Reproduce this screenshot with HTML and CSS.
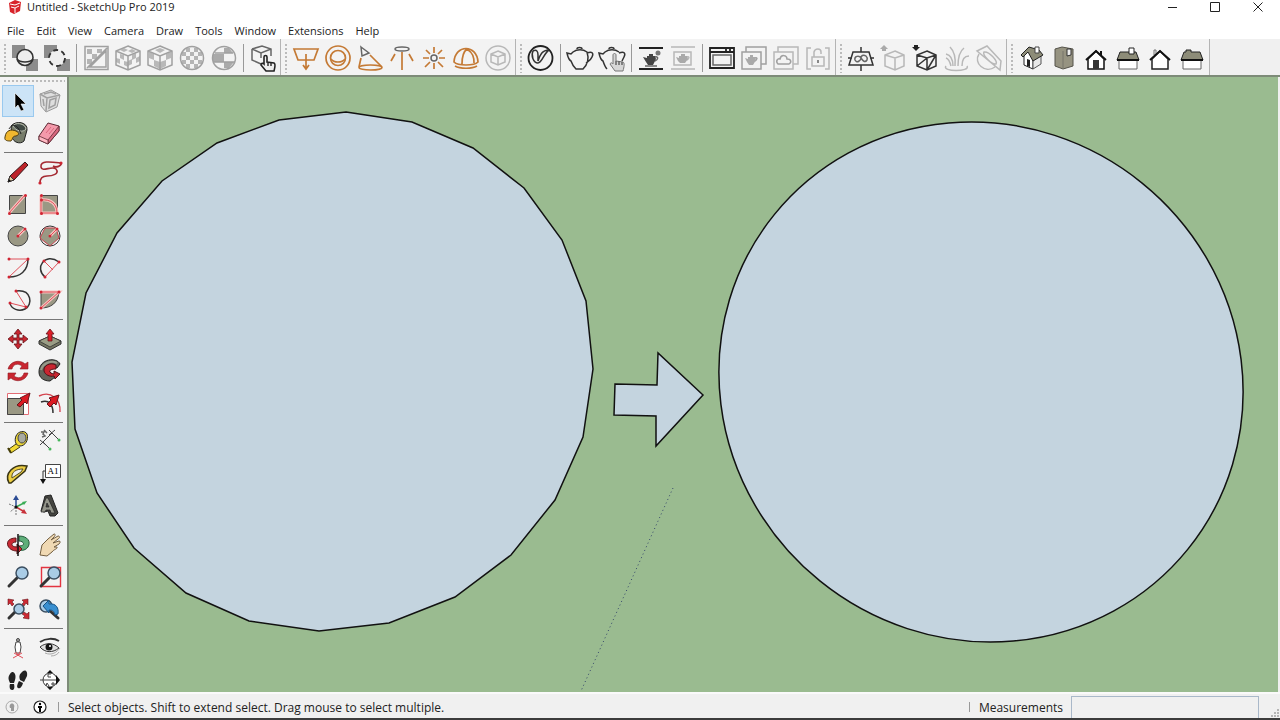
FILE: index.html
```html
<!DOCTYPE html>
<html lang="en">
<head>
    <meta charset="UTF-8">
    <meta name="viewport" content="width=device-width, initial-scale=1">
    <title>Untitled - SketchUp Pro 2019</title>
    <link rel="stylesheet" href="styles.css">
</head>
<body>

<header class="titlebar">
    <svg class="logo" viewBox="0 0 14 14"><path d="M1 3L7 0l6 2-1 9-6 3-4-2z" fill="#d8232a"/><path d="M2 4l5 1 5-2M3 7l4 1v5M7 8l4-2" fill="none" stroke="#fff"/></svg>
    <h1>Untitled - SketchUp Pro 2019</h1>
    <div class="window-buttons">
        <button aria-label="Minimize"><svg viewBox="0 0 12 12"><path d="M2 6.500h9"/></svg></button>
        <button aria-label="Maximize"><svg viewBox="0 0 12 12"><path d="M1.500 1.500h9v9h-9z"/></svg></button>
        <button aria-label="Close"><svg viewBox="0 0 12 12"><path d="M1.500 1.500l9 9M10.500 1.500l-9 9"/></svg></button>
    </div>
</header>

<nav class="menu">
    <button>File</button>
    <button>Edit</button>
    <button>View</button>
    <button>Camera</button>
    <button>Draw</button>
    <button>Tools</button>
    <button>Window</button>
    <button>Extensions</button>
    <button>Help</button>
</nav>

<div class="toolbar">
    <div class="group">
        <span class="grip"></span>
        <button class="tool" aria-label="Solid section"><svg viewBox="0 0 32 32"><path d="M3 3h13v13H3zM17 17h12v12H17z" fill="#8c8c8c"/><circle cx="16" cy="15.500" r="8" fill="#eee" stroke="#333" stroke-width="1.600"/><path d="M8 17c3 4 13 4 16 0" class="dark"/></svg></button>
        <button class="tool" aria-label="Hidden section"><svg viewBox="0 0 32 32"><path d="M3 3h13v13H3zM16 17h13v12H16z" fill="#8c8c8c"/><circle cx="16" cy="16" r="8" fill="#eee" stroke="#333" stroke-width="1.800" stroke-dasharray="5 3.400"/></svg></button>
        <span class="divider"></span>
        <button class="tool" aria-label="Plane mapping"><svg viewBox="0 0 32 32"><path d="M7 7h5v5H7zM17 7h5v4h-5zM12 12h5v5h-5zM7 17h5v5H7z" fill="#b4b4b4"/><path d="M5 4.500h23v23H5zM7 26L27 6M10 25h16V9z" class="grey"/></svg></button>
        <button class="tool" aria-label="Box mapping"><svg viewBox="0 0 32 32"><path d="M8 12l4 1v5l-4-2zM4 16l4 1v5l-4-2zM12 19l4 1v5l-4-2zM20 13l4-2v5l-4 2zM16 19l4-2v5l-4 2zM24 16l4-2v5l-4 2zM12 6l4 2-4 2-4-2zM20 7l4 2-4 2-4-2z" fill="#b8b8b8"/><path d="M16 4l12 5v14l-12 5-12-5V9zM4 9l12 5 12-5M16 14v14" class="grey"/></svg></button>
        <button class="tool" aria-label="Fit box mapping"><svg viewBox="0 0 32 32"><path d="M16 6l5 2-5 3-5-3zM5 10l5 2v6l-5-2zM10 18l6 2v7l-6-3zM22 12l5-2v6l-5 2zM16 20l6-2v6l-6 3z" fill="#b8b8b8"/><path d="M16 4l12 5v14l-12 5-12-5V9zM4 9l12 5 12-5M16 14v14" class="grey"/></svg></button>
        <button class="tool" aria-label="Sphere mapping"><svg viewBox="0 0 32 32"><path d="M10 6h4v4h-4zM18 6h4v4h-4zM6 10h4v4H6zM14 10h4v4h-4zM22 10h4v4h-4zM10 14h4v4h-4zM18 14h4v4h-4zM6 18h4v4H6zM14 18h4v4h-4zM22 18h4v4h-4zM10 22h4v4h-4zM18 22h4v4h-4z" fill="#b4b4b4"/><circle cx="16" cy="16" r="11.500" class="grey"/></svg></button>
        <button class="tool" aria-label="Wrap mapping"><svg viewBox="0 0 32 32"><path d="M16 6h5l4 5h-9zM5 12h11v8H5zM16 20h10l-5 6h-5z" fill="#aaa"/><circle cx="16" cy="16" r="11.500" class="grey"/><path d="M7 11h18M5 20h22" class="grey"/></svg></button>
        <span class="divider"></span>
        <button class="tool" aria-label="Pick object"><svg viewBox="0 0 32 32"><path d="M5 7l10-3 9 3v7M5 7l9 4 10-4M5 7v11l9 4M14 11v5" class="mid"/><path d="M17 15c0-2 3-2 3 0v5l7 1c2 1 1 4 0 8h-8l-5-6c0-2 2-2 3-1z" fill="#eee" stroke="#222" stroke-width="1.600"/><path d="M21 21v3M24 21v3" class="dark"/></svg></button>
    </div>
    <div class="group">
        <span class="grip"></span>
        <button class="tool" aria-label="Plane light"><svg viewBox="0 0 32 32"><path d="M4 7h24l-4 11H8zM16 12v14M13 23l3 4 3-4" class="orange"/></svg></button>
        <button class="tool" aria-label="Sphere light"><svg viewBox="0 0 32 32"><circle cx="16" cy="16" r="12" class="orange"/><circle cx="16" cy="16" r="7.500" class="orange"/><path d="M9 17c3 4 11 4 14 0" class="orange"/></svg></button>
        <button class="tool" aria-label="Spot light"><svg viewBox="0 0 32 32"><path d="M7 5l8 6-7 3z" class="mid"/><path d="M7 16L5 25M16 13l12 12" class="orange"/><ellipse cx="16.500" cy="25.500" rx="11.500" ry="2.500" class="orange"/></svg></button>
        <button class="tool" aria-label="IES light"><svg viewBox="0 0 32 32"><ellipse cx="16" cy="7" rx="7" ry="2" class="mid"/><path d="M16 10v18M9 12l-4 7M23 12l4 7" class="orange"/></svg></button>
        <button class="tool" aria-label="Omni light"><svg viewBox="0 0 32 32"><circle cx="16" cy="16" r="3" class="mid"/><path d="M16 5v6M16 21v6M5 16h6M21 16h6M8 8l4 4M20 20l5 5M24 8l-4 4M12 20l-5 5" class="orange"/></svg></button>
        <button class="tool" aria-label="Dome light"><svg viewBox="0 0 32 32"><path d="M4 20C5 2 27 2 28 20c-4 4-20 4-24 0zM17 7c-4 3-5 9-5 15M17 7c6 4 7 8 7 14M5 24c5 3 17 3 22 0" class="orange"/></svg></button>
        <button class="tool" aria-label="Mesh light"><svg viewBox="0 0 32 32"><g class="light"><circle cx="16" cy="16" r="12"/><path d="M16 9l7 3v8l-7 3-7-3v-8zM9 12l7 3 7-3M16 15v8"/></g></svg></button>
    </div>
    <div class="group">
        <span class="grip"></span>
        <button class="tool" aria-label="Asset editor"><svg viewBox="0 0 32 32"><circle cx="15.500" cy="16" r="12" fill="none" stroke="#222" stroke-width="1.800"/><path d="M8 9c4-2 5 1 5 4v6c2-6 4-11 11-11M8 9c-2 4 0 12 5 12 4 0 6-10 11-13" class="dark"/></svg></button>
        <span class="divider"></span>
        <button class="tool" aria-label="Render"><svg viewBox="0 0 32 32"><path d="M9 10c4-3 10-3 14 0 2 6 1 12-4 17h-7c-2-2-4-5-5-8-2-1-3-3-4-8l4 1zM13 7c0-2 5-2 5 0M23 11c5-2 7 0 5 4-1 3-3 4-6 6" class="dark"/></svg></button>
        <button class="tool" aria-label="Interactive render"><svg viewBox="0 0 32 32"><path d="M11 27c-2-2-3-5-4-8-2-1-3-3-4-8l4 1 2-2c4-3 10-3 14 0M13 7c0-2 5-2 5 0M23 11c5-2 7 0 5 4l-2 4" class="dark"/><path d="M17 13c0-2 3-2 3 0v6l7 1c2 1 1 5 0 9h-8l-5-7c1-2 2-1 3 0z" fill="#d7d7d7" stroke="#777"/><path d="M20 19v4M23 19v4M26 20v3" class="mid"/></svg></button>
        <span class="divider"></span>
        <button class="tool" aria-label="Viewport render"><svg viewBox="0 0 32 32"><path d="M4 6h24M4 27h24" stroke="#222" stroke-width="2"/><path d="M12 14h8l1 3-3 6h-5l-2-3-3-5 4 1zM14 12h4v2h-4z" fill="#444"/><path d="M20 15c4-1 3 3 0 4M10 24h12" class="mid"/><circle cx="23" cy="11" r="2.500" fill="#777"/></svg></button>
        <button class="tool" aria-label="Viewport region"><svg viewBox="0 0 32 32"><g class="light"><path d="M4 5h24M4 27h24M7 10h17v13H7zM20 15c3-1 2 2 0 3"/></g><path d="M12 14h8l1 3-3 4h-5l-2-2-2-4 3 1zM14 12h4v2h-4z" fill="#aaa"/></svg></button>
        <span class="divider"></span>
        <button class="tool" aria-label="Frame buffer"><svg viewBox="0 0 32 32"><path d="M4 6h24v20H4zM4 10h24M20 6v4M24 6v4" fill="none" stroke="#222" stroke-width="1.800"/><path d="M7 13h18v10H7z" class="mid"/></svg></button>
        <button class="tool" aria-label="Batch render"><svg viewBox="0 0 32 32"><g class="grey"><path d="M4 10h19v17H4zM8 10V5h20v17h-5M17 16c3-1 2 2 0 3"/></g><path d="M10 15h7l1 3-3 5h-4l-2-3-2-4 3 1zM12 13h3v2h-3z" fill="#aaa"/></svg></button>
        <button class="tool" aria-label="Cloud render"><svg viewBox="0 0 32 32"><g class="light"><path d="M4 10h19v17H4zM8 10V5h20v17h-5"/></g><path d="M8 22c-3-3 0-6 2-5 1-5 7-4 7 0 4 0 5 3 2 5z" class="grey"/></svg></button>
        <button class="tool" aria-label="Lock camera"><svg viewBox="0 0 32 32"><g class="light"><path d="M9 6H5v21h4M23 6h4v21h-4M10 15h12v9H10zM12 15V10c1-4 7-4 7 0v2"/></g><path d="M15 18h2v3h-2z" fill="#888"/></svg></button>
    </div>
    <div class="group">
        <span class="grip"></span>
        <button class="tool" aria-label="Infinite plane"><svg viewBox="0 0 32 32"><path d="M8 10h16l4 13H4zM16 5v5M16 23v6M3 16h4M25 16h4" class="dark"/><path d="M21 14c-3-2-5 0-5 2s-4 6-6 2c-1-4 4-5 6-2s4 5 6 2c1-2 0-3-1-4" class="mid"/></svg></button>
        <button class="tool" aria-label="Export proxy"><svg viewBox="0 0 32 32"><g class="light"><path d="M18 9l9 4v11l-9 4-10-4V13zM8 13l10 3 9-3M18 16v12"/></g><path d="M3 7l4-4 4 4H9v2H5V7z" fill="#aaa"/></svg></button>
        <button class="tool" aria-label="Import proxy"><svg viewBox="0 0 32 32"><path d="M18 9l9 4v11l-9 4-10-4V13zM8 13l10 3 9-3M18 16v12M8 24l10-8M18 28l9-15" class="dark"/><path d="M5 3h4v2h2L7 9 3 5h2z" fill="#222"/></svg></button>
        <button class="tool" aria-label="Fur"><svg viewBox="0 0 32 32"><g class="light"><path d="M12 24c0-7-3-11-7-12M14 24c1-10-1-15-5-19M17 24c0-9 2-15 6-18M21 24c0-7 3-10 7-10M5 16c3 1 4 4 5 8M5 24c-5 6 25 6 21 0"/></g></svg></button>
        <button class="tool" aria-label="Clipper"><svg viewBox="0 0 32 32"><g class="light"><path d="M4 9l10-5 14 15-1 9zM11 10c5-1 14 9 12 12-4 1-14-9-12-12zM6 12c-6 9 6 20 16 13"/></g></svg></button>
    </div>
    <div class="group">
        <span class="grip"></span>
        <button class="tool" aria-label="Iso"><svg viewBox="0 0 32 32"><path d="M8 14l5-5 4 8v10l-9-4z" fill="#fff" stroke="#222"/><path d="M17 18l8-5v9l-8 5z" fill="#e8e8e8" stroke="#555"/><path d="M5 13l8-8 10 3 4 5-10 6-5-9-5 5z" fill="#8d8c78" stroke="#222"/><path d="M19 5h4v6h-4z" fill="#fff" stroke="#444"/><path d="M11 17l3 1v7l-3-1z" fill="#222"/></svg></button>
        <button class="tool" aria-label="Top"><svg viewBox="0 0 32 32"><path d="M7 7l7-2 11 2v17l-10 3-8-3z" fill="#969381" stroke="#55534a"/><path d="M15 9v18" stroke="#77756a"/><path d="M19 7h4v6l-4 1z" fill="#eee" stroke="#333"/></svg></button>
        <button class="tool" aria-label="Front"><svg viewBox="0 0 32 32"><path d="M8 17l8-8 8 8v10H8z" fill="#fff" stroke="#111" stroke-width="1.500"/><path d="M6 18l10-9 10 9M21 9v4" fill="none" stroke="#111" stroke-width="2"/><path d="M13 18h6v9h-6z" fill="#333"/></svg></button>
        <button class="tool" aria-label="Right"><svg viewBox="0 0 32 32"><path d="M7 18h18v9H7z" fill="#fff" stroke="#666"/><path d="M8 10h16l3 8H5z" fill="#8d8c78" stroke="#222"/><path d="M5 18h22" stroke="#111" stroke-width="2"/><path d="M17 6h5v6h-5z" fill="#fff" stroke="#222"/></svg></button>
        <button class="tool" aria-label="Back"><svg viewBox="0 0 32 32"><path d="M10 8h2v5h-2z" fill="#eee" stroke="#777"/><path d="M8 17l8-8 8 8v10H8z" fill="#fff" stroke="#222" stroke-width="1.500"/><path d="M6 18l10-9 10 9" fill="none" stroke="#111" stroke-width="2"/></svg></button>
        <button class="tool" aria-label="Left"><svg viewBox="0 0 32 32"><path d="M7 18h18v9H7z" fill="#fff" stroke="#666"/><path d="M8 10h2V8h5v2h9l3 8H5z" fill="#8d8c78" stroke="#222"/><path d="M5 18h22" stroke="#111" stroke-width="2"/></svg></button>
    </div>
</div>

<main class="workspace">
    <aside class="palette">
        <span class="palette-grip"></span>
        <div class="tools">
            <button class="tool selected" aria-label="Select"><svg viewBox="0 0 32 32"><path d="M13 8v15l3-3 3 6 3-1-3-6h5z" fill="#000" stroke="#fff" stroke-width="0.600"/></svg></button>
            <button class="tool" aria-label="Make component"><svg viewBox="0 0 32 32"><path d="M6 9l11-4 9 5-3 12-11 5-5-6z" fill="#dedede" stroke="#999"/><path d="M6 9l7 4 13-3M13 13l-1 13M10 9l7-2 5 2M9 14l1 7M16 15l6-2-1 7-6 3z" class="grey"/></svg></button>
            <button class="tool" aria-label="Paint bucket"><svg viewBox="0 0 32 32"><path d="M9 9c5-6 17-4 16 4l-3 11c-4 4-11 1-12-4z" fill="#777d6b" stroke="#222"/><path d="M11 9c2-4 12-3 13 3-3 4-10 2-13-3z" fill="#404944" stroke="#b9beb0"/><path d="M3 20c1-7 6-8 11-6 4 2 3 4 0 5-4 0-3 3-5 5-3 0-7 0-6-4z" fill="#f0b72e" stroke="#4c3a10"/><path d="M7 12c3-5 8-6 12 5" fill="none" stroke="#222"/></svg></button>
            <button class="tool" aria-label="Eraser"><svg viewBox="0 0 32 32"><path d="M14 6l11 3v5L14 27l-9-4v-4z" fill="#f49aab" stroke="#5e2934"/><path d="M14 23L25 9v5L14 27z" fill="#d9687f" stroke="#5e2934" stroke-width="0.800"/><path d="M5 19l9 4v4l-9-4z" fill="#ffb8c2" stroke="#5e2934" stroke-width="0.800"/><path d="M17 10l-5 6M20 11l-5 6" fill="none" stroke="#d9687f"/></svg></button>
        </div>
        <span class="rule"></span>
        <div class="tools">
            <button class="tool" aria-label="Line"><svg viewBox="0 0 32 32"><path d="M6 26l2-6L23 6l3 3-14 15z" fill="#bd2329" stroke="#351819"/><path d="M6 26l2-6 4 4z" fill="#e6c69a" stroke="#333"/><path d="M6 26l1-3 2 2z" fill="#111"/></svg></button>
            <button class="tool" aria-label="Freehand"><svg viewBox="0 0 32 32"><path d="M27 7C18 6 6 4 7 11c1 6 11-2 15 2 4 5-4 7-9 7-4 0-7 2-7 7M27 7c1 3-5 5-8 3" fill="none" stroke="#a52a32" stroke-width="1.600"/><g class="dot"><circle cx="6" cy="27" r="1.600"/><circle cx="27" cy="7" r="1.600"/></g></svg></button>
            <button class="tool" aria-label="Rectangle"><svg viewBox="0 0 32 32"><path d="M7.500 7.500h16v18h-16z" class="face"/><path d="M7 25L23 7" class="halo"/><path d="M7 25L23 7" class="red"/><g class="dot"><circle cx="7.500" cy="25.500" r="1.500"/><circle cx="23.500" cy="7.500" r="1.500"/></g></svg></button>
            <button class="tool" aria-label="Rotated rectangle"><svg viewBox="0 0 32 32"><path d="M7.500 7.500h16v18h-16z" class="face"/><path d="M7 12c10-1 16 4 16 13M7 7v18h16" class="halo"/><path d="M7 12c10-1 16 4 16 13M7 7v18h16" class="red"/><g class="dot"><circle cx="7.500" cy="7.500" r="1.500"/><circle cx="7.500" cy="12" r="1.500"/><circle cx="7.500" cy="25.500" r="1.500"/><circle cx="23.500" cy="25.500" r="1.500"/></g></svg></button>
            <button class="tool" aria-label="Circle"><svg viewBox="0 0 32 32"><circle cx="16" cy="16" r="10" class="face"/><path d="M16 16l7-7" class="halo"/><path d="M16 16l7-7" class="red"/><g class="dot"><circle cx="16" cy="16" r="1.500"/><circle cx="23" cy="9" r="1.500"/></g></svg></button>
            <button class="tool" aria-label="Polygon"><svg viewBox="0 0 32 32"><circle cx="16" cy="16" r="10" fill="#eee" stroke="#333"/><path d="M11 8l11 0 3 10-9 8-10-8z" fill="#9a9884" stroke="#c6424b"/><path d="M16 16l7-7" class="halo"/><path d="M16 16l7-7" class="red"/><g class="dot"><circle cx="16" cy="16" r="1.500"/><circle cx="23" cy="9" r="1.500"/></g></svg></button>
            <button class="tool" aria-label="Arc"><svg viewBox="0 0 32 32"><path d="M26 7c0 12-8 18-19 18" class="dark"/><path d="M7 7h19L7 25" class="red"/><g class="dot"><circle cx="7" cy="7" r="1.500"/><circle cx="26" cy="7" r="1.500"/><circle cx="7" cy="25" r="1.500"/></g></svg></button>
            <button class="tool" aria-label="2 point arc"><svg viewBox="0 0 32 32"><path d="M11 25C0 16 11 0 25 10" class="dark"/><path d="M10 9l9 9M25 10L11 25" class="red"/><g class="dot"><circle cx="10" cy="9" r="1.500"/><circle cx="25" cy="10" r="1.500"/><circle cx="11" cy="25" r="1.500"/></g></svg></button>
            <button class="tool" aria-label="3 point arc"><svg viewBox="0 0 32 32"><path d="M14 7c16-2 17 14 9 18-6 3-14 0-15-6" class="dark"/><path d="M14 7l10 16-16-4" class="red"/><g class="dot"><circle cx="14" cy="7" r="1.500"/><circle cx="24" cy="23" r="1.500"/><circle cx="8" cy="19" r="1.500"/></g></svg></button>
            <button class="tool" aria-label="Pie"><svg viewBox="0 0 32 32"><path d="M7 8h18c-1 11-8 16-18 16z" class="face"/><path d="M7 24L25 8H7" class="halo"/><path d="M7 24L25 8H7" class="red"/><g class="dot"><circle cx="7" cy="8" r="1.500"/><circle cx="25" cy="8" r="1.500"/><circle cx="7" cy="24" r="1.500"/></g></svg></button>
        </div>
        <span class="rule"></span>
        <div class="tools">
            <button class="tool" aria-label="Move"><svg viewBox="0 0 32 32"><path d="M16 6l4 5h-3v4h4v-3l5 4-5 4v-3h-4v4h3l-4 5-4-5h3v-4h-4v3l-5-4 5-4v3h4v-4h-3z" fill="#c92630" stroke="#65151b" stroke-width="0.800"/></svg></button>
            <button class="tool" aria-label="Push pull"><svg viewBox="0 0 32 32"><path d="M5 18l11-5 11 5v3l-11 6-11-6z" fill="#737460" stroke="#333"/><path d="M5 18l11-5 11 5-11 6z" fill="#9a9d85" stroke="#333" stroke-width="0.800"/><path d="M16 6l4 5h-2v7h-4v-7h-2z" fill="#dc1f28" stroke="#65151b" stroke-width="0.800"/></svg></button>
            <button class="tool" aria-label="Rotate"><svg viewBox="0 0 32 32"><path d="M6 14c2-8 12-10 17-5l3-2v7h-8l2-3c-4-3-9-2-10 3zM26 18c-2 8-12 10-17 5l-3 2v-7h8l-2 3c4 3 9 2 10-3z" fill="#c92630" stroke="#8f1b22" stroke-width="0.600"/></svg></button>
            <button class="tool" aria-label="Follow me"><svg viewBox="0 0 32 32"><path d="M5 17C5 3 23 2 26 9l-3 4c-6-4-11 0-7 4l5 5-5 4c-6 0-11-3-11-9z" fill="#63645a" stroke="#222"/><path d="M22 10c-5-3-13 0-12 6 1 4 6 6 10 5l1 3 5-5-6-3v3c-6-1-6-5 2-5z" fill="#c92630" stroke="#4a1417"/><path d="M7 15c2-7 10-10 16-7" fill="none" stroke="#999c8b" stroke-width="2"/></svg></button>
            <button class="tool" aria-label="Scale"><svg viewBox="0 0 32 32"><path d="M5.500 6.500h21v21h-21z" fill="#fff" stroke="#e46d75"/><path d="M5.500 11.500h16v16h-16z" class="face"/><path d="M15 18l5-5-2-2 10-5-3 11-2-2-5 5z" fill="#db1922" stroke="#65151b"/></svg></button>
            <button class="tool" aria-label="Offset"><svg viewBox="0 0 32 32"><path d="M5 9c12-6 22 4 21 16" fill="none" stroke="#d4444e" stroke-width="1.400"/><path d="M7 15c8-3 12 3 12 11" class="dark"/><path d="M13 17l4-4-2-2 10-3-3 10-2-2-4 4z" fill="#db1922" stroke="#65151b"/></svg></button>
        </div>
        <span class="rule"></span>
        <div class="tools">
            <button class="tool" aria-label="Tape measure"><svg viewBox="0 0 32 32"><path d="M14 18l-7 5 2 4 9-6" fill="#f1d934" stroke="#443d08"/><path d="M14 10c2-5 9-6 11-2 2 6-2 12-7 12-4 0-6-5-4-10z" fill="#f1d934" stroke="#222"/><ellipse cx="20" cy="12" rx="4" ry="5" fill="#a8aaa0" stroke="#444"/><path d="M6 22l3 5" stroke="#443d08" stroke-width="2"/></svg></button>
            <button class="tool" aria-label="Dimension"><svg viewBox="0 0 32 32"><path d="M9 16l9-9M9 16l6 6M18 7l6 6M6 14l6 5M6 19l6-6M15 4l6 6M15 9l6-5" fill="none" stroke="#444"/><path d="M7 6l3 0-1 2 2 2-3 1M10 4l3 3" class="mid"/><circle cx="16" cy="23" r="1.500" fill="#45b65a"/><circle cx="25" cy="14" r="1.500" fill="#45b65a"/></svg></button>
            <button class="tool" aria-label="Protractor"><svg viewBox="0 0 32 32"><path d="M7 25C2 16 11 5 25 8l-2 5L9 25z" fill="#edce42" stroke="#393515" stroke-width="1.500"/><path d="M10 20c-1-6 4-9 11-9l-2 3z" fill="#eee" stroke="#544e22"/></svg></button>
            <button class="tool" aria-label="Text"><svg viewBox="0 0 32 32"><path d="M11.500 6.500h15v13h-15z" fill="#fff" stroke="#444"/><text x="19" y="16" class="label-text">A1</text><path d="M11 13H9v9" fill="none" stroke="#333"/><path d="M6 21h6l-3 5z" fill="#111"/></svg></button>
            <button class="tool" aria-label="Axes"><svg viewBox="0 0 32 32"><path d="M14 17V7" stroke="#2b4c94" stroke-width="1.500"/><path d="M14 5l3 5h-6z" fill="#2b4c94"/><path d="M14 17l8-4" stroke="#3aad56" stroke-width="1.500"/><path d="M25 11l-3 4-2-3z" fill="#3aad56"/><path d="M14 17l7 4" stroke="#c8323a" stroke-width="1.500"/><path d="M25 24l-6-1 3-4z" fill="#c8323a"/><path d="M7 14l7 3-6 5M14 17v8" stroke="#777" stroke-dasharray="2 1" fill="none"/><circle cx="14" cy="17" r="1.600" fill="#111"/></svg></button>
            <button class="tool" aria-label="3D text"><svg viewBox="0 0 32 32"><path d="M7 21l4-15 6-1 7 18-3 3-5 0-2-5-4 1z" fill="#454540" stroke="#222"/><path d="M12 8h2l7 15h-4l-1-3-4 0-1 2H7zM12 17h3l-2-4z" fill="#94958a" stroke="#222" stroke-width="0.700"/></svg></button>
        </div>
        <span class="rule"></span>
        <div class="tools">
            <button class="tool" aria-label="Orbit"><svg viewBox="0 0 32 32"><path d="M17 7c9 0 12 6 9 11-2 3-6 4-9 3v-4c7 0 5-5 0-5z" fill="#5eae79" stroke="#24583a"/><path d="M14 9c-6 0-10 3-8 8 2 4 6 5 9 5v3l5-5-5-5v3c-7 0-6-5-1-5z" fill="#ca2a34" stroke="#5c171b"/><path d="M16 5v22" stroke="#111" stroke-width="1.500"/></svg></button>
            <button class="tool" aria-label="Pan"><svg viewBox="0 0 32 32"><path d="M6 26l2-10 6-6 6-5c2 0 1 2 0 3l-3 3 7-4c2 0 2 2 0 3l-5 4 6-2c2 0 1 2 0 3l-5 3 3 0c1 2-3 2-5 5l-5 4z" fill="#f0d9b3" stroke="#735f42"/></svg></button>
            <button class="tool" aria-label="Zoom"><svg viewBox="0 0 32 32"><path d="M7 25l8-8" class="handle"/><circle cx="20" cy="12" r="6" class="lens"/></svg></button>
            <button class="tool" aria-label="Zoom window"><svg viewBox="0 0 32 32"><path d="M7.500 6.500h19v19h-19z" fill="none" stroke="#e33440" stroke-width="1.400"/><path d="M7 25l8-8" class="handle"/><circle cx="20" cy="12" r="6" class="lens"/></svg></button>
            <button class="tool" aria-label="Zoom extents"><svg viewBox="0 0 32 32"><path d="M6 6l6 1-2 2 2 2-2 2-2-3-2 2zM26 6l-6 1 2 2-2 2 2 2 2-3 2 2zM27 26l-6-1 2-2-3-2 2-2 3 2 2-2z" fill="#ce2933" stroke="#65151b" stroke-width="0.600"/><path d="M7 25l6-6" class="handle"/><circle cx="17" cy="16" r="5" class="lens"/></svg></button>
            <button class="tool" aria-label="Previous"><svg viewBox="0 0 32 32"><path d="M15 17l9 8" class="handle"/><circle cx="12" cy="13" r="6" class="lens"/><path d="M9 13l6-6v4c7-1 10 4 9 10l-3 1c-1-4-2-5-6-5v3z" fill="#398fd0" stroke="#175283"/></svg></button>
        </div>
        <span class="rule"></span>
        <div class="tools">
            <button class="tool" aria-label="Position camera"><svg viewBox="0 0 32 32"><circle cx="16" cy="8" r="1.500" fill="#aaa" stroke="#444"/><path d="M14 10h4l1 5-1 6h-4l-1-6z" fill="#fff" stroke="#444"/><path d="M11 26l9-5M12 21l9 5M14 20l2 3 2-3" class="red"/></svg></button>
            <button class="tool" aria-label="Look around"><svg viewBox="0 0 32 32"><path d="M6 10c6-4 14-4 19-1" fill="none" stroke="#333" stroke-width="2"/><path d="M6 15c6-5 14-4 19 1-6 5-14 5-19-1z" fill="#ddd" stroke="#333"/><circle cx="15" cy="15" r="3.500" fill="#111"/><circle cx="16" cy="14" r="1" fill="#fff"/><path d="M11 21c7 3 12-1 15-5M17 24c4 0 7-2 8-4" stroke="#aaa" fill="none"/></svg></button>
            <button class="tool" aria-label="Walk"><svg viewBox="0 0 32 32"><path d="M8 10c3-5 7 0 5 6l-1 3H8c-2-4-2-6 0-9zM8 20h4c1 4 0 6-2 6s-3-3-2-6zM19 9c4-5 7-2 6 3l-3 6-4-2c-1-3-1-5 1-7zM17 17l4 2c-1 4-3 6-5 5s0-5 1-7z" fill="#222"/></svg></button>
            <button class="tool" aria-label="Section plane"><svg viewBox="0 0 32 32"><circle cx="16" cy="16" r="7" fill="#fff" stroke="#333"/><path d="M6 16h19M17 10h-3v3h3M12 22l1-3 2 3M18 19h2v2h-2z" fill="none" stroke="#444"/><path d="M22 11l4 5-4 5zM13 9l3-3 3 3zM13 23l3 3 3-3z" fill="#111"/></svg></button>
        </div>
    </aside>

    <svg class="canvas" viewBox="69 77 1209 615" preserveAspectRatio="xMinYMin meet" role="img" aria-label="Model">
        <path class="shape" d="M346 112L412 122 473 148 524 188 562 240 586 301 593 369 583 437 555 500 511 555 455 597 389 623 319 631 249 621 186 593 134 548 97 493 75 429 72 362 86 293 117 233 162 181 217 143 279 120z"/>
        <ellipse class="shape" cx="981" cy="382" rx="266" ry="256" transform="rotate(39 981 382)"/>
        <path class="shape" d="M615 384l42 1 1-32 45 42-47 51v-30l-42-1z"/>
        <path class="guide" d="M673 488L581 691"/>
    </svg>
</main>

<footer class="status">
    <svg class="badge" viewBox="0 0 14 14"><circle cx="7" cy="7" r="6" fill="none" stroke="#aaa"/><path d="M5 8c-2-6 6-6 4 0v3H6V8z" fill="#999"/></svg>
    <svg class="badge" viewBox="0 0 14 14"><circle cx="7" cy="7" r="6" fill="#fff" stroke="#222" stroke-width="1.200"/><circle cx="7" cy="4" r="1.200"/><path d="M5 6h4v2H8v4H6V8H5z"/></svg>
    <span class="tick"></span>
    <p>Select objects. Shift to extend select. Drag mouse to select multiple.</p>
    <span class="tick push"></span>
    <label for="measurements">Measurements</label>
    <input id="measurements" type="text">
    <svg class="resize" viewBox="0 0 10 10"><path d="M7 1h2v2H7zM7 4h2v2H7zM7 7h2v2H7zM4 4h2v2H4zM4 7h2v2H4zM1 7h2v2H1z" fill="#b5b5b5"/></svg>
</footer>

</body>
</html>
```
FILE: styles.css
```css
* {
    box-sizing: border-box;
}
body {
    margin: 0;
    height: 100vh;
    display: flex;
    flex-direction: column;
    background-color: #f0f0f0;
    color: #222;
    font-family: "Open Sans", "Noto Sans", sans-serif;
    font-size: 11px;
    border-bottom: 2px solid #3c3c3c;
}
button {
    padding: 0;
    border: none;
    background: none;
    color: inherit;
    font: inherit;
}
svg {
    display: block;
}

/* title and menu */
.titlebar {
    display: flex;
    align-items: center;
    height: 20px;
    padding: 0 16px 6px 8px;
    background-color: white;
}
.logo {
    width: 14px;
    height: 14px;
    margin-right: 5px;
}
.titlebar h1 {
    margin: 0;
    font-size: 11px;
    font-weight: normal;
    line-height: 14px;
}
.window-buttons {
    display: flex;
    gap: 31px;
    margin-left: auto;
}
.window-buttons svg {
    width: 12px;
    height: 12px;
    fill: none;
    stroke: #222;
}
.menu {
    display: flex;
    gap: 12px;
    height: 19px;
    padding-left: 7px;
    background-color: white;
}
.menu button {
    height: 22px;
    line-height: 22px;
}

/* top toolbar */
.toolbar {
    display: flex;
    height: 38px;
    border-bottom: 2px solid #7d8b78;
}
.group {
    display: flex;
    align-items: center;
    padding: 2px 1px 0 0;
    border-right: 1px solid #b4b4b4;
    background-color: #f3f3f3;
}
.grip {
    width: 4px;
    height: 30px;
    margin: 0 2px 0 3px;
    background: radial-gradient(circle, #bbb 1px, transparent 1px) 0 0 / 4px 4px;
}
.divider {
    width: 1px;
    height: 28px;
    margin: 0 3px;
    background-color: #999;
}
.tool {
    width: 32px;
    height: 32px;
}
.tool svg {
    width: 32px;
    height: 32px;
}

/* strokes shared by the icons */
.dark, .mid, .grey, .light, .orange, .red, .halo {
    fill: none;
    stroke-width: 1.5;
}
.dark {
    stroke: #333;
}
.mid {
    stroke: #666;
}
.grey {
    stroke: #a0a0a0;
}
.light {
    stroke: #b8b8b8;
}
.orange {
    stroke: #c47a35;
    stroke-width: 1.7;
}
.red {
    stroke: #e0505a;
    stroke-width: 1;
}
.halo {
    stroke: #f8c4c0;
    stroke-width: 3;
}
.dot {
    fill: #cf2533;
}
.face {
    fill: #9a9884;
    stroke: #444;
}
.handle {
    fill: none;
    stroke: #333;
    stroke-width: 3;
    stroke-linecap: round;
}
.lens {
    fill: #a9cce6;
    stroke: #3b4e60;
    stroke-width: 1.5;
}
.label-text {
    font: 9px "Liberation Serif", serif;
    text-anchor: middle;
}

/* drawing area and tools */
.workspace {
    flex: 1;
    display: flex;
    min-height: 0;
    padding-right: 2px;
}
.palette {
    width: 69px;
    flex: none;
    padding: 2px 1px 0 2px;
    border-right: 2px solid #7d8b78;
    background-color: #f3f3f3;
}
.palette-grip {
    display: block;
    height: 4px;
    margin: 0 1px 2px;
    background: radial-gradient(circle, #bbb 1px, transparent 1px) 0 0 / 4px 4px;
}
.tools {
    display: grid;
    grid-template-columns: 32px 32px;
}
.selected {
    background-color: #cce4f7;
    outline: 1px solid #99c9ef;
    outline-offset: -1px;
}
.rule {
    display: block;
    height: 1px;
    margin: 3px 3px 3px 2px;
    background-color: #777;
}
.canvas {
    flex: 1;
    min-width: 0;
    width: 100%;
    height: 100%;
    background-color: #9abb90;
}
.shape {
    fill: #c4d4df;
    stroke: #111;
    stroke-width: 1.5;
}
.guide {
    stroke: #34456b;
    stroke-dasharray: 1 3;
}

/* status bar */
.status {
    display: flex;
    align-items: center;
    height: 26px;
    padding: 2px 0 0 5px;
    border-top: 2px solid #fafafa;
    font-size: 12px;
}
.badge {
    width: 14px;
    height: 14px;
    margin-right: 14px;
}
.status p {
    margin: 0;
}
.tick {
    width: 1px;
    height: 10px;
    margin: 0 9px 0 -3px;
    background-color: #999;
}
.push {
    margin-left: auto;
}
.status input {
    width: 188px;
    height: 22px;
    margin: 0 11px 0 8px;
    padding: 0 4px;
    border: 1px solid #a9b8c9;
    border-bottom: none;
    background-color: #f0f0f0;
    font: inherit;
}
.resize {
    width: 10px;
    height: 10px;
    align-self: flex-end;
}
```
